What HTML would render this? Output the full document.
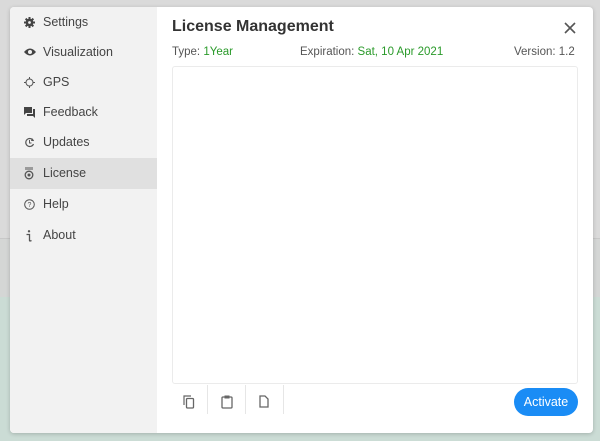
<!DOCTYPE html>
<html><head><style>
body{margin:0;width:600px;height:441px;overflow:hidden;position:relative;font-family:"Liberation Sans",sans-serif;background:#dadada}
.bg2{position:absolute;left:0;top:297px;width:600px;height:144px;background:#cbdcd5}
.bg1{position:absolute;left:0;top:238px;width:600px;height:59px;background:#d4d6d5;border-top:1px solid #c8c8c8}
.modal{position:absolute;left:10px;top:7px;width:583px;height:426px;background:#fff;border-radius:4px;overflow:hidden;box-shadow:0 1px 4px rgba(0,0,0,.2)}
.side{position:absolute;left:0;top:0;width:147px;height:100%;background:#f2f2f2}
.item{position:absolute;left:0;width:147px;height:31px;font-size:12.5px;color:#444;line-height:31px}
.item span.t{position:absolute;left:33px}
.item svg{position:absolute;left:14px;top:10px}
.sel{background:#e0e0e0}
h1{position:absolute;left:162px;top:11px;margin:0;font-size:16px;font-weight:bold;color:#333}
.meta{position:absolute;top:39px;font-size:11.5px;color:#555}
.g{color:#2a9a2a}
.ta{position:absolute;left:162px;top:59px;width:404px;height:316px;border:1px solid #ebebeb;border-radius:3px}
.tb{position:absolute;top:378px;width:1px;height:29px;background:#e6e6e6}
.ic{position:absolute;top:388px}
.btn{position:absolute;left:504px;top:381px;width:64px;height:28px;border-radius:14px;background:#1a8cf5;color:#fff;font-size:12.5px;line-height:28px;text-align:center}
</style></head><body>
<div class="bg1"></div><div class="bg2"></div>
<div class="modal">
<div class="side">
<div class="item" style="top:0"><svg width="11" height="11" viewBox="0 0 12 12"><circle cx="6" cy="6" r="4.2" fill="#444"/><g stroke="#444" stroke-width="2.2"><path d="M6 0v12M0 6h12M1.8 1.8l8.4 8.4M10.2 1.8l-8.4 8.4"/></g><circle cx="6" cy="6" r="1.5" fill="#f2f2f2"/></svg><span class="t">Settings</span></div>
<div class="item" style="top:30px"><svg width="12" height="10" viewBox="0 0 12 10"><path d="M0 5Q6 -2 12 5Q6 12 0 5Z" fill="#444"/><circle cx="6" cy="5" r="2" fill="#f2f2f2"/></svg><span class="t">Visualization</span></div>
<div class="item" style="top:60px"><svg width="11" height="11" viewBox="0 0 11 11"><circle cx="5.5" cy="5.5" r="3.5" fill="none" stroke="#555" stroke-width="1"/><path d="M5.5 0v2M5.5 9v2M0 5.5h2M9 5.5h2" stroke="#555"/></svg><span class="t">GPS</span></div>
<div class="item" style="top:90px"><svg width="11" height="11" viewBox="0 0 11 11"><path d="M0 0h8v6H2L0 8Z" fill="#444"/><path d="M9 2h2v9l-2-2H3V7h6Z" fill="#444"/></svg><span class="t">Feedback</span></div>
<div class="item" style="top:120px"><svg width="11" height="11" viewBox="0 0 11 11"><path d="M9.5 4A4 4 0 1 0 9.5 7" fill="none" stroke="#555" stroke-width="1.2"/><path d="M5.5 3v3h2" fill="none" stroke="#555"/><path d="M8 1l2 3-3 0z" fill="#555"/></svg><span class="t">Updates</span></div>
<div class="item sel" style="top:151px"><svg width="10" height="13" viewBox="0 0 10 13" style="top:9px"><path d="M2 0v3M4 0v3M6 0v3M8 0v3" stroke="#555"/><circle cx="5" cy="8" r="3.8" fill="none" stroke="#555" stroke-width="1.3"/><circle cx="5" cy="8" r="1.5" fill="#555"/></svg><span class="t">License</span></div>
<div class="item" style="top:182px"><svg width="11" height="11" viewBox="0 0 11 11"><circle cx="5.5" cy="5.5" r="4.8" fill="none" stroke="#555"/><text x="5.5" y="8.2" font-size="7" text-anchor="middle" fill="#555" font-family="Liberation Sans">?</text></svg><span class="t">Help</span></div>
<div class="item" style="top:213px"><svg width="10" height="12" viewBox="0 0 10 12"><circle cx="5" cy="1.3" r="1.2" fill="#555"/><path d="M2.5 4.5h3v6q0 1 2 0" fill="none" stroke="#555" stroke-width="1.3"/></svg><span class="t">About</span></div>
</div>
<h1>License Management</h1>
<svg style="position:absolute;left:554px;top:15px" width="12" height="12" viewBox="0 0 12 12"><path d="M1 1l10 10M11 1L1 11" stroke="#555" stroke-width="1.6"/></svg>
<div class="meta" style="left:162px">Type: <span class="g">1Year</span></div>
<div class="meta" style="left:290px">Expiration: <span class="g">Sat, 10 Apr 2021</span></div>
<div class="meta" style="left:504px">Version: 1.2</div>
<div class="ta"></div>
<svg class="ic" style="left:173px" width="12" height="14" viewBox="0 0 12 14"><path d="M1 10V1h7" fill="none" stroke="#666" stroke-width="1.2"/><rect x="3.5" y="3.5" width="7" height="9.5" rx="1" fill="none" stroke="#666" stroke-width="1.3"/></svg>
<div class="tb" style="left:197px"></div>
<svg class="ic" style="left:211px" width="12" height="14" viewBox="0 0 12 14"><rect x="1" y="2" width="10" height="11" rx="1" fill="none" stroke="#666" stroke-width="1.3"/><rect x="3.5" y="0.5" width="5" height="3" fill="#666"/></svg>
<div class="tb" style="left:235px"></div>
<svg class="ic" style="left:249px" width="10" height="13" viewBox="0 0 10 13"><path d="M1 1h5l3 3v8H1Z" fill="none" stroke="#666" stroke-width="1.3"/></svg>
<div class="tb" style="left:273px"></div>
<div class="btn">Activate</div>
</div>
</body></html>
